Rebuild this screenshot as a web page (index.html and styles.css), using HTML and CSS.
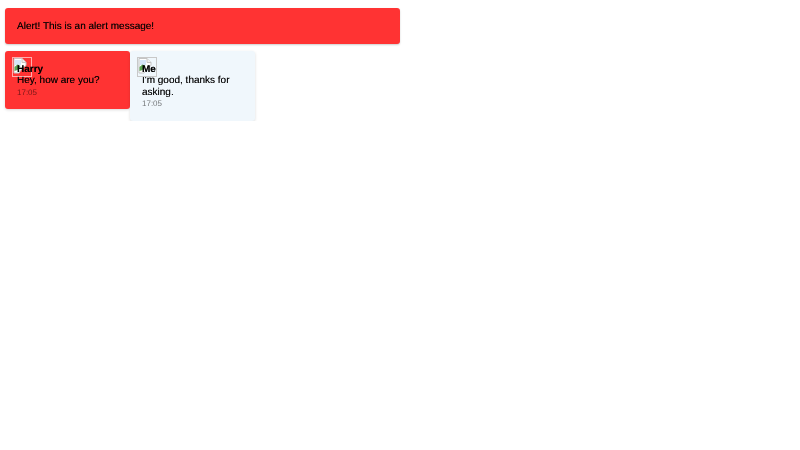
FILE: index.html
```html
<!DOCTYPE html>
<html lang="en">
<head>
<meta charset="utf-8">
<title>Alert</title>
<link rel="stylesheet" href="styles.css">
</head>
<body>
<div class="page">
  <div class="alert">Alert! This is an alert message!</div>
  <div class="messages">
    <div class="card card-alert">
      <span class="avatar"><svg class="broken" viewBox="0 0 16 16" width="16" height="16"><path d="M1 .5h8l4 4v3l-4 3-3 4.500H1z" fill="#fff" stroke="#c4c4c4"/><path d="M9 .5v4h4" fill="#eee" stroke="#c4c4c4"/><path d="M2 2h6v5H2z" fill="#d5e5f8"/><path d="M1.500 9l3-2.500 3 1.500-3 4-3 1z" fill="#5aa350"/></svg></span>
      <div class="name">Harry</div>
      <div class="text">Hey, how are you?</div>
      <div class="time">17:05</div>
    </div>
    <div class="card card-self">
      <span class="avatar"><svg class="broken" viewBox="0 0 16 16" width="16" height="16"><path d="M1 .5h8l4 4v3l-4 3-3 4.500H1z" fill="#fff" stroke="#c4c4c4"/><path d="M9 .5v4h4" fill="#eee" stroke="#c4c4c4"/><path d="M2 2h6v5H2z" fill="#d5e5f8"/><path d="M1.500 9l3-2.500 3 1.500-3 4-3 1z" fill="#5aa350"/></svg></span>
      <div class="name">Me</div>
      <div class="text">I'm good, thanks for asking.</div>
      <div class="time">17:05</div>
    </div>
  </div>
</div>
</body>
</html>
```
FILE: styles.css
```css
html, body { margin: 0; padding: 0; background: #fff; }
body { font-family: "Liberation Sans", Arial, sans-serif; font-size: 10px; line-height: 11.5px; color: #000; text-rendering: geometricPrecision; }
.page { width: 395px; padding: 8px 0 0 5px; filter: blur(.25px); }
.alert, .name, .text { text-shadow: 0 0 .6px rgba(0,0,0,.55); }
.alert {
  height: 36px;
  box-sizing: border-box;
  padding: 1px 12px 0;
  display: flex;
  align-items: center;
  background: #ff3333;
  border-radius: 3px;
  box-shadow: 0 1px 2px rgba(0,0,0,.2);
}
.messages { display: flex; align-items: flex-start; margin-top: 7px; }
.card {
  position: relative;
  box-sizing: border-box;
  width: 125px;
  padding: 12.5px 12px 12px;
  border-radius: 3px;
  box-shadow: 0 1px 3px rgba(0,0,0,.15);
}
.card-alert { background: #ff3333; }
.card-self { background: #f0f7fc; }
.avatar {
  position: absolute;
  left: 7px;
  top: 6px;
  width: 20px;
  height: 20px;
  box-sizing: border-box;
  border: 1px solid rgba(255,255,255,.6);
}
.card-self .avatar { border-color: #c8c8c8; }
.broken { display: block; }
.name { position: relative; font-weight: bold; }
.time { font-size: 8px; line-height: 9.5px; color: rgba(0,0,0,.55); margin-top: 1px; }
```
